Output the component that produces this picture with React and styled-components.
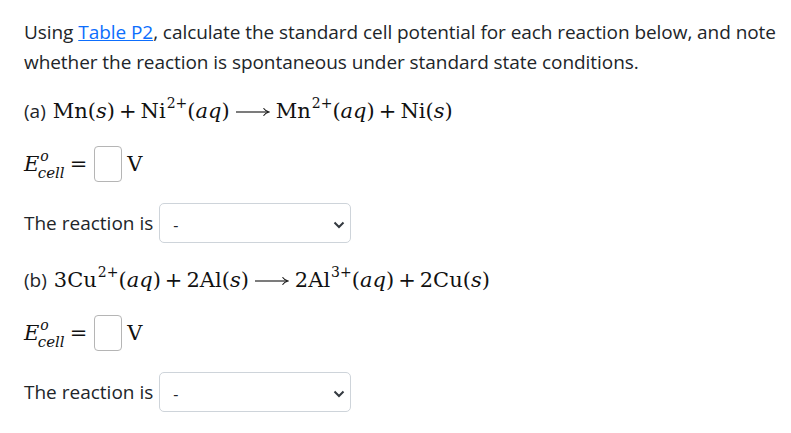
import React from 'react';
import styled, { createGlobalStyle } from 'styled-components';

const GlobalStyle = createGlobalStyle`
  body {
    margin: 0;
    background: #fff;
    color: #212529;
    font-family: "Open Sans", "Noto Sans", sans-serif;
  }
`;

const Page = styled.div`
  padding: 17px 24px 0;
  width: 760px;
  font-size: 19px;
`;

const Intro = styled.p`
  margin: 0 0 9px;
  line-height: 30px;
  font-size: 19px;
  letter-spacing: -0.06px;
`;

const Link = styled.a`
  color: #0d6efd;
  text-decoration: underline;
`;

const Row = styled.div`
  display: flex;
  align-items: center;
  box-sizing: border-box;
  height: ${(p) => p.h}px;
`;

const Label = styled.span`
  margin-right: 7px;
`;

const Math = styled.span`
  font-family: "DejaVu Serif", "Liberation Serif", serif;
  font-size: 21px;
  white-space: nowrap;
  color: #111;
`;

const It = styled.i`
  font-style: italic;
`;

const Sup = styled.sup`
  font-size: 14px;
  vertical-align: 10px;
  line-height: 0;
  margin-left: 1px;
`;

const Sub = styled.sub`
  font-size: 15px;
  vertical-align: -7px;
  line-height: 0;
  font-style: italic;
  margin-left: -11px;
`;

const Op = styled.span`
  margin: 0 ${(p) => p.space || 4}px;
`;

const Arrow = styled.svg`
  margin: 0 6px 0 6px;
  vertical-align: 1px;
`;

const AnswerBox = styled.input`
  width: 28px;
  height: 36px;
  box-sizing: border-box;
  border: 1px solid #b5b5b5;
  border-radius: 4px;
  margin: 0 5px 0 2px;
  padding: 0;
`;

const SelectWrap = styled.span`
  position: relative;
  display: inline-flex;
  margin-left: 6px;
`;

const Select = styled.select`
  appearance: none;
  width: 192px;
  height: 40px;
  box-sizing: border-box;
  border: 1px solid #ced4da;
  border-radius: 5px;
  background: #fff;
  padding: 4px 13px 0;
  font-family: "Open Sans", "Noto Sans", sans-serif;
  font-size: 16px;
  color: #212529;
`;

const Chevron = styled.svg`
  position: absolute;
  right: 6px;
  top: 18px;
  pointer-events: none;
`;

const LongArrow = () => (
  <Arrow width="34" height="10" viewBox="0 0 34 10">
    <path d="M0 5 H32" stroke="#111" strokeWidth="1.1" />
    <path d="M27.5 1.2 Q29.5 4 33 5 Q29.5 6 27.5 8.8" fill="none" stroke="#111" strokeWidth="1.1" />
  </Arrow>
);

const Reaction = ({ label, children }) => (
  <Row h={50}>
    <Label>({label})</Label>
    <Math>{children}</Math>
  </Row>
);

const Potential = () => (
  <Row h={55}>
    <Math>
      <It>E</It>
      <Sup><It>o</It></Sup>
      <Sub>cell</Sub>
    </Math>
    <Math>
      <Op space={5}>=</Op>
    </Math>
    <AnswerBox aria-label="cell potential" />
    <Math>V</Math>
  </Row>
);

const Spontaneity = () => (
  <Row h={64}>
    <span>The reaction is</span>
    <SelectWrap>
      <Select defaultValue="-">
        <option value="-">-</option>
        <option value="spontaneous">spontaneous</option>
        <option value="nonspontaneous">nonspontaneous</option>
      </Select>
      <Chevron width="12" height="8" viewBox="0 0 12 8">
        <path d="M1.5 1.5 L6 6 L10.5 1.5" fill="none" stroke="#343a40" strokeWidth="2" />
      </Chevron>
    </SelectWrap>
  </Row>
);

export default function App() {
  return (
    <>
      <GlobalStyle />
      <Page>
        <Intro>
          Using <Link href="#">Table P2</Link>, calculate the standard cell potential for each reaction below, and note
          whether the reaction is spontaneous under standard state conditions.
        </Intro>

        <Reaction label="a">
          Mn(<It>s</It>)<Op>+</Op>Ni<Sup>2+</Sup>(<It>aq</It>)
          <LongArrow />
          Mn<Sup>2+</Sup>(<It>aq</It>)<Op>+</Op>Ni(<It>s</It>)
        </Reaction>
        <Potential />
        <Spontaneity />

        <Reaction label="b">
          3Cu<Sup>2+</Sup>(<It>aq</It>)<Op>+</Op>2Al(<It>s</It>)
          <LongArrow />
          2Al<Sup>3+</Sup>(<It>aq</It>)<Op>+</Op>2Cu(<It>s</It>)
        </Reaction>
        <Potential />
        <Spontaneity />
      </Page>
    </>
  );
}
